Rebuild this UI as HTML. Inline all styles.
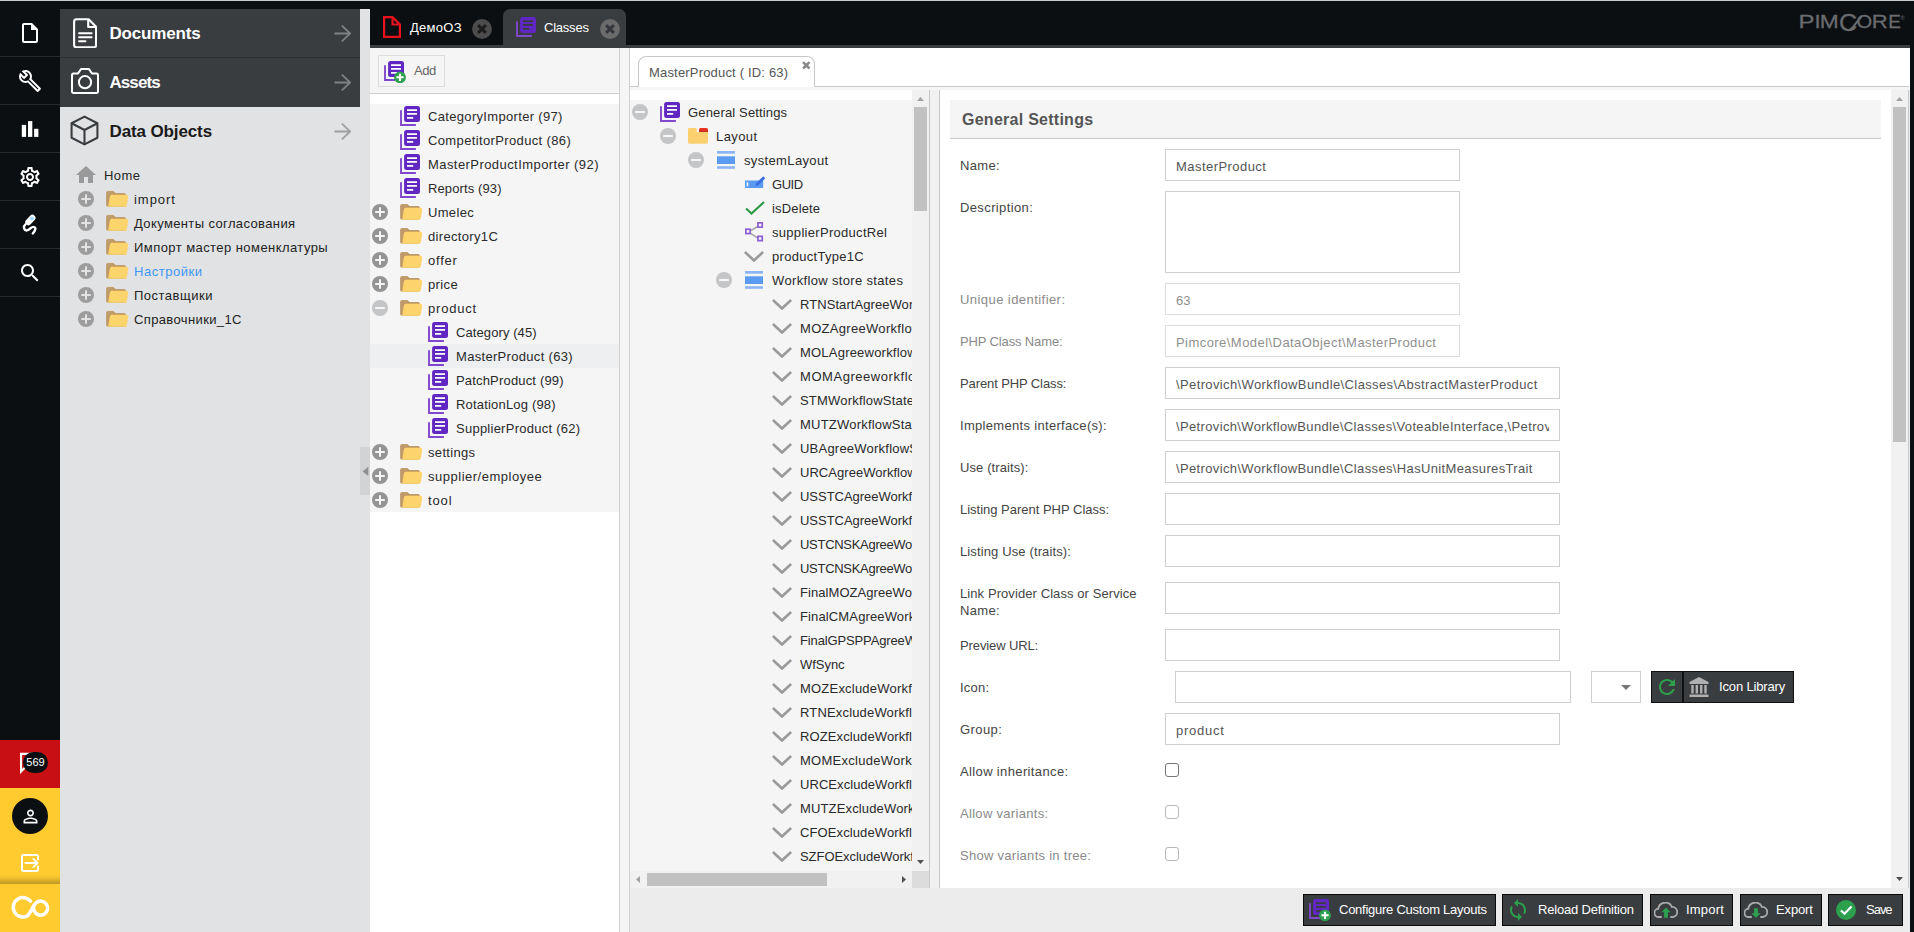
<!DOCTYPE html>
<html lang="en"><head><meta charset="utf-8"><title>Pimcore</title><style>
html,body{margin:0;padding:0}
body{width:1914px;height:932px;overflow:hidden;position:relative;background:#0c0f12;font-family:"Liberation Sans", sans-serif;font-size:13px;}
div{box-sizing:border-box}
</style></head><body>
<div style="position:absolute;left:0px;top:0px;width:1914px;height:1px;background:#c9cacb"></div>
<nav id="pimcore_navigation">
<div style="position:absolute;left:0px;top:9px;width:60px;height:48px;border-bottom:1px solid #26292c"><div style="position:absolute;left:18px;top:12px;"><svg width="24" height="24" viewBox="0 0 24 24" style="display:block;"><path fill="#fff" d="M14 2H6c-1.1 0-1.99.9-1.99 2L4 20c0 1.1.89 2 1.99 2H18c1.1 0 2-.9 2-2V8l-6-6zM6 20V4h7v5h5v11H6z"/></svg></div></div>
<div style="position:absolute;left:0px;top:57px;width:60px;height:48px;border-bottom:1px solid #26292c"><div style="position:absolute;left:18px;top:12px;"><svg width="24" height="24" viewBox="0 0 24 24" style="display:block;"><path fill="#fff" d="M22.61 18.99l-9.08-9.08c.93-2.34.45-5.1-1.44-7C9.79.61 6.21.4 3.66 2.26L7.5 6.11 6.08 7.52 2.25 3.69C.39 6.23.6 9.82 2.9 12.11c1.86 1.86 4.57 2.35 6.89 1.48l9.11 9.11c.39.39 1.02.39 1.41 0l2.3-2.3c.4-.38.4-1.01 0-1.41zm-3 1.6l-9.46-9.46c-.61.45-1.29.72-2 .82-1.36.2-2.79-.21-3.83-1.25C3.37 9.76 2.93 8.5 3 7.26l3.09 3.09 4.24-4.24-3.09-3.09c1.24-.07 2.49.37 3.44 1.31 1.08 1.08 1.49 2.57 1.24 3.96-.12.71-.42 1.37-.88 1.96l9.45 9.45-.88.89z"/></svg></div></div>
<div style="position:absolute;left:0px;top:105px;width:60px;height:48px;border-bottom:1px solid #26292c"><div style="position:absolute;left:18px;top:12px;"><svg width="24" height="24" viewBox="0 0 24 24" style="display:block;"><g fill="#fff"><rect x="3.800" y="7.900" width="4.300" height="12"/><rect x="10" y="4.100" width="4.300" height="15.800"/><rect x="16.100" y="11.800" width="4.300" height="8.100"/></g></svg></div></div>
<div style="position:absolute;left:0px;top:153px;width:60px;height:48px;border-bottom:1px solid #26292c"><div style="position:absolute;left:18px;top:12px;"><svg width="24" height="24" viewBox="0 0 24 24" style="display:block;"><path fill="#fff" d="M19.43 12.98c.04-.32.07-.64.07-.98 0-.34-.03-.66-.07-.98l2.11-1.65c.19-.15.24-.42.12-.64l-2-3.46c-.09-.16-.26-.25-.44-.25-.06 0-.12.01-.17.03l-2.49 1c-.52-.4-1.08-.73-1.69-.98l-.38-2.65C14.46 2.18 14.25 2 14 2h-4c-.25 0-.46.18-.49.42l-.38 2.65c-.61.25-1.17.59-1.69.98l-2.49-1c-.06-.02-.12-.03-.18-.03-.17 0-.34.09-.43.25l-2 3.46c-.13.22-.07.49.12.64l2.11 1.65c-.04.32-.07.65-.07.98 0 .33.03.66.07.98l-2.11 1.65c-.19.15-.24.42-.12.64l2 3.46c.09.16.26.25.44.25.06 0 .12-.01.17-.03l2.49-1c.52.4 1.08.73 1.69.98l.38 2.65c.03.24.24.42.49.42h4c.25 0 .46-.18.49-.42l.38-2.65c.61-.25 1.17-.59 1.69-.98l2.49 1c.06.02.12.03.18.03.17 0 .34-.09.43-.25l2-3.46c.12-.22.07-.49-.12-.64l-2.11-1.65zm-1.98-1.71c.04.31.05.52.05.73 0 .21-.02.43-.05.73l-.14 1.13.89.7 1.08.84-.7 1.21-1.27-.51-1.04-.42-.9.68c-.43.32-.84.56-1.25.73l-1.06.43-.16 1.13-.2 1.35h-1.4l-.19-1.35-.16-1.13-1.06-.43c-.43-.18-.83-.41-1.23-.71l-.91-.7-1.06.43-1.27.51-.7-1.21 1.08-.84.89-.7-.14-1.13c-.03-.31-.05-.54-.05-.74s.02-.43.05-.73l.14-1.13-.89-.7-1.08-.84.7-1.21 1.27.51 1.04.42.9-.68c.43-.32.84-.56 1.25-.73l1.06-.43.16-1.13.2-1.35h1.39l.19 1.35.16 1.13 1.06.43c.43.18.83.41 1.23.71l.91.7 1.06-.43 1.27-.51.7 1.21-1.07.85-.89.7.14 1.13zM12 8c-2.21 0-4 1.79-4 4s1.79 4 4 4 4-1.79 4-4-1.79-4-4-4zm0 6c-1.1 0-2-.9-2-2s.9-2 2-2 2 .9 2 2-.9 2-2 2z"/></svg></div></div>
<div style="position:absolute;left:0px;top:201px;width:60px;height:48px;border-bottom:1px solid #26292c"><div style="position:absolute;left:18px;top:4px;"><svg width="24" height="32" viewBox="0 0 24 32" style="display:block;"><g fill="none" stroke="#fff" stroke-linecap="round"><path stroke-width="2.400" d="M7.500 19.300C6.300 20.300 5.700 21.800 6 22.800C6.500 24.800 7.900 25.600 8.900 25.400C10.300 25.200 11.500 24.100 12.500 23.300C13.500 22.500 14.500 21.800 15.500 21.900C17 22 17.600 23.300 17.300 24.300C16.900 26 15.800 27.500 14.800 28.500"/><path stroke-width="6.200" d="M10.400 17.100L14.400 12.900"/></g><circle cx="13.900" cy="13.400" r="2" fill="#a4daf8"/></svg></div></div>
<div style="position:absolute;left:0px;top:249px;width:60px;height:48px;border-bottom:1px solid #26292c"><div style="position:absolute;left:18px;top:12px;"><svg width="24" height="24" viewBox="0 0 24 24" style="display:block;"><path fill="#fff" d="M15.5 14h-.79l-.28-.27C15.41 12.59 16 11.11 16 9.5 16 5.91 13.09 3 9.5 3S3 5.91 3 9.5 5.91 16 9.5 16c1.61 0 3.09-.59 4.23-1.57l.27.28v.79l5 4.99L20.49 19l-4.99-5zm-6 0C7.01 14 5 11.99 5 9.5S7.01 5 9.5 5 14 7.01 14 9.5 11.99 14 9.5 14z"/></svg></div></div>
<div style="position:absolute;left:0px;top:740px;width:60px;height:48px;background:#c81014"><div style="position:absolute;left:19px;top:12px;"><svg width="22" height="22" viewBox="0 0 22 22" style="display:block;"><path fill="none" stroke="#fff" stroke-width="2.100" stroke-linejoin="miter" d="M2.050 1.900H20V14.500H7L2.050 19.500z"/></svg></div><div style="position:absolute;left:23px;top:12px;width:25px;height:21px;background:#0c0f12;border-radius:11px;color:#fff;font-size:11px;line-height:21px;text-align:center;letter-spacing:0px">569</div></div>
<div style="position:absolute;left:0px;top:788px;width:60px;height:144px;background:#ffcb2f"><div style="position:absolute;left:12px;top:10px;width:36px;height:36px;background:#0c0f12;border-radius:18px"><div style="position:absolute;left:7.5px;top:7.5px;"><svg width="21" height="21" viewBox="0 0 24 24" style="display:block;"><path fill="#fff" d="M12 5.9c1.16 0 2.1.94 2.1 2.1s-.94 2.1-2.1 2.1S9.9 9.16 9.9 8s.94-2.1 2.1-2.1m0 9c2.97 0 6.1 1.46 6.1 2.1v1.1H5.9V17c0-.64 3.13-2.1 6.1-2.1M12 4C9.79 4 8 5.79 8 8s1.79 4 4 4 4-1.79 4-4-1.79-4-4-4zm0 9c-2.67 0-8 1.34-8 4v3h16v-3c0-2.66-5.33-4-8-4z"/></svg></div></div><div style="position:absolute;left:18px;top:63px;"><svg width="24" height="24" viewBox="0 0 24 24" style="display:block;"><g fill="none" stroke="#fff" stroke-width="2" stroke-linecap="round" stroke-linejoin="round"><path d="M20 8.500V5.500a1.500 1.500 0 0 0-1.500-1.500h-13A1.500 1.500 0 0 0 4 5.500v13A1.500 1.500 0 0 0 5.500 20h13a1.500 1.500 0 0 0 1.500-1.500V15.500"/><path d="M7.500 12H19M15.500 8l4 4-4 4"/></g></svg></div><div style="position:absolute;left:0px;top:86px;width:60px;height:10px;background:linear-gradient(to bottom,rgba(0,0,0,0),rgba(0,0,0,.06) 40%,rgba(0,0,0,.26))"></div><div style="position:absolute;left:8px;top:107px;"><svg width="44" height="26" viewBox="0 0 44 26" style="display:block;"><g fill="none" stroke="#fff" stroke-width="3.500" stroke-linecap="round"><path d="M22.500 6.200A9.700 9.700 0 1 0 19 21.100C22.500 19 24.500 11 27.800 8.100A7 7 0 1 1 26.200 15.800A7 7 0 0 1 27.800 8.100"/></g></svg></div></div>
</nav>
<aside id="pimcore_panel_tree_left">
<div style="position:absolute;left:60px;top:9px;width:300px;height:48px;background:#3a3d40"><div style="position:absolute;left:12.9px;top:8.65px;"><svg width="24.2" height="30.6" viewBox="0 0 24 30" style="display:block;"><g fill="none" stroke="#fff" stroke-width="2.100" stroke-linejoin="round" stroke-linecap="butt"><path d="M15.500 1.100H3.500a2.400 2.400 0 0 0-2.400 2.400v23a2.400 2.400 0 0 0 2.400 2.400h17a2.400 2.400 0 0 0 2.400-2.400V8.500z"/><path d="M15.100 1.500v7.300h7.300"/><path d="M6 15H18.500M6 18.900H18.500M6 22.900H12.400" stroke-width="1.900" stroke-linecap="round"/></g></svg></div><div style="position:absolute;left:49.5px;top:1px;height:48px;line-height:48px;font-size:17px;color:#fff;font-weight:700;letter-spacing:-0.184px;white-space:nowrap;">Documents</div><div style="position:absolute;left:274.3px;top:15.9px;"><svg width="17" height="17" viewBox="0 0 17 17" style="display:block;"><g fill="none" stroke="#7f8183" stroke-width="1.800" stroke-linecap="butt"><path d="M0.500 8.500H16M7.800 0.600L16.200 8.500L7.800 16.400"/></g></svg></div></div>
<div style="position:absolute;left:60px;top:57px;width:300px;height:1px;background:#2e3134"></div>
<div style="position:absolute;left:60px;top:58px;width:300px;height:49px;background:#3a3d40"><div style="position:absolute;left:11.2px;top:9.9px;"><svg width="28" height="26" viewBox="0 0 28 26" style="display:block;"><g fill="none" stroke="#fff" stroke-width="2" stroke-linejoin="round"><path d="M7 5.500L10 1.100H18L21 5.500H25.500A1.500 1.500 0 0 1 27 7V23.500A1.500 1.500 0 0 1 25.500 25H2.500A1.500 1.500 0 0 1 1 23.500V7A1.500 1.500 0 0 1 2.500 5.500z"/><circle cx="14" cy="14.200" r="6.100"/></g></svg></div><div style="position:absolute;left:49.5px;top:1px;height:48px;line-height:48px;font-size:17px;color:#fff;font-weight:700;letter-spacing:-0.932px;white-space:nowrap;">Assets</div><div style="position:absolute;left:274.3px;top:15.9px;"><svg width="17" height="17" viewBox="0 0 17 17" style="display:block;"><g fill="none" stroke="#7f8183" stroke-width="1.800" stroke-linecap="butt"><path d="M0.500 8.500H16M7.800 0.600L16.200 8.500L7.800 16.400"/></g></svg></div></div>
<div style="position:absolute;left:60px;top:107px;width:300px;height:825px;background:#e1e2e3"><div style="position:absolute;left:10px;top:8px;"><svg width="29" height="31" viewBox="0 0 28 30" style="display:block;"><g fill="none" stroke="#3a3d40" stroke-width="2" stroke-linejoin="round"><path d="M14 1.500L26.500 8v14L14 28.500 1.500 22V8z"/><path d="M1.500 8L14 14.500 26.500 8M14 14.500v14"/></g></svg></div><div style="position:absolute;left:49.5px;top:1px;height:48px;line-height:48px;font-size:17px;color:#1a1a1a;font-weight:700;letter-spacing:-0.121px;white-space:nowrap;">Data Objects</div><div style="position:absolute;left:274.3px;top:15.9px;"><svg width="17" height="17" viewBox="0 0 17 17" style="display:block;"><g fill="none" stroke="#9fa0a1" stroke-width="1.800" stroke-linecap="butt"><path d="M0.500 8.500H16M7.800 0.600L16.200 8.500L7.800 16.400"/></g></svg></div></div>
<div style="position:absolute;left:74px;top:162.5px;"><svg width="24" height="24" viewBox="0 0 24 24" style="display:block;"><path fill="#9a9a9a" d="M10 20v-6h4v6h5v-8h3L12 3 2 12h3v8z"/></svg></div>
<div style="position:absolute;left:104px;top:164px;height:24px;line-height:24px;font-size:13px;color:#222;font-weight:400;letter-spacing:0.474px;white-space:nowrap;">Home</div>
<div style="position:absolute;left:78px;top:191px;"><svg width="16" height="16" viewBox="0 0 16 16" style="display:block;"><circle cx="8" cy="8" r="8" fill="#9d9d9e"/><path d="M8 3.200v9.600M3.200 8h9.600" stroke="#e1e2e3" stroke-width="2" fill="none"/></svg></div>
<div style="position:absolute;left:103.7px;top:187.35px;"><svg width="25.2" height="23.7" viewBox="0 0 48 48" preserveAspectRatio="none" style="display:block"><path fill="#c09a68" d="M38,12H22l-4-4H8c-2.200,0-4,1.800-4,4v24c0,2.200,1.800,4,4,4h31c1.700,0,3-1.300,3-3V16C42,13.800,40.200,12,38,12z"/><path fill="#fcd46b" d="M42.200,15.600H15.300c-1.900,0-3.600,1.400-3.900,3.300L8,40h31.700c1.900,0,3.600-1.400,3.900-3.300l2.500-16.400C46.600,17.900,44.700,15.600,42.200,15.600z"/></svg></div>
<div style="position:absolute;left:134px;top:188px;height:24px;line-height:24px;font-size:13px;color:#222;font-weight:400;letter-spacing:0.956px;white-space:nowrap;">import</div>
<div style="position:absolute;left:78px;top:215px;"><svg width="16" height="16" viewBox="0 0 16 16" style="display:block;"><circle cx="8" cy="8" r="8" fill="#9d9d9e"/><path d="M8 3.200v9.600M3.200 8h9.600" stroke="#e1e2e3" stroke-width="2" fill="none"/></svg></div>
<div style="position:absolute;left:103.7px;top:211.35px;"><svg width="25.2" height="23.7" viewBox="0 0 48 48" preserveAspectRatio="none" style="display:block"><path fill="#c09a68" d="M38,12H22l-4-4H8c-2.200,0-4,1.800-4,4v24c0,2.200,1.800,4,4,4h31c1.700,0,3-1.300,3-3V16C42,13.800,40.200,12,38,12z"/><path fill="#fcd46b" d="M42.200,15.600H15.300c-1.900,0-3.600,1.400-3.900,3.300L8,40h31.700c1.900,0,3.600-1.400,3.900-3.300l2.500-16.400C46.600,17.900,44.700,15.600,42.200,15.600z"/></svg></div>
<div style="position:absolute;left:134px;top:212px;height:24px;line-height:24px;font-size:13px;color:#222;font-weight:400;letter-spacing:0.38px;white-space:nowrap;">Документы согласования</div>
<div style="position:absolute;left:78px;top:239px;"><svg width="16" height="16" viewBox="0 0 16 16" style="display:block;"><circle cx="8" cy="8" r="8" fill="#9d9d9e"/><path d="M8 3.200v9.600M3.200 8h9.600" stroke="#e1e2e3" stroke-width="2" fill="none"/></svg></div>
<div style="position:absolute;left:103.7px;top:235.35px;"><svg width="25.2" height="23.7" viewBox="0 0 48 48" preserveAspectRatio="none" style="display:block"><path fill="#c09a68" d="M38,12H22l-4-4H8c-2.200,0-4,1.800-4,4v24c0,2.200,1.800,4,4,4h31c1.700,0,3-1.300,3-3V16C42,13.800,40.200,12,38,12z"/><path fill="#fcd46b" d="M42.200,15.600H15.300c-1.900,0-3.600,1.400-3.900,3.300L8,40h31.700c1.900,0,3.600-1.400,3.900-3.300l2.500-16.400C46.600,17.900,44.700,15.600,42.200,15.600z"/></svg></div>
<div style="position:absolute;left:134px;top:236px;height:24px;line-height:24px;font-size:13px;color:#222;font-weight:400;letter-spacing:0.438px;white-space:nowrap;">Импорт мастер номенклатуры</div>
<div style="position:absolute;left:78px;top:263px;"><svg width="16" height="16" viewBox="0 0 16 16" style="display:block;"><circle cx="8" cy="8" r="8" fill="#9d9d9e"/><path d="M8 3.200v9.600M3.200 8h9.600" stroke="#e1e2e3" stroke-width="2" fill="none"/></svg></div>
<div style="position:absolute;left:103.7px;top:259.35px;"><svg width="25.2" height="23.7" viewBox="0 0 48 48" preserveAspectRatio="none" style="display:block"><path fill="#c09a68" d="M38,12H22l-4-4H8c-2.200,0-4,1.800-4,4v24c0,2.200,1.800,4,4,4h31c1.700,0,3-1.300,3-3V16C42,13.800,40.200,12,38,12z"/><path fill="#fcd46b" d="M42.200,15.600H15.300c-1.900,0-3.600,1.400-3.900,3.300L8,40h31.700c1.900,0,3.600-1.400,3.900-3.300l2.500-16.400C46.600,17.900,44.700,15.600,42.200,15.600z"/></svg></div>
<div style="position:absolute;left:134px;top:260px;height:24px;line-height:24px;font-size:13px;color:#3f97f6;font-weight:400;letter-spacing:0.544px;white-space:nowrap;">Настройки</div>
<div style="position:absolute;left:78px;top:287px;"><svg width="16" height="16" viewBox="0 0 16 16" style="display:block;"><circle cx="8" cy="8" r="8" fill="#9d9d9e"/><path d="M8 3.200v9.600M3.200 8h9.600" stroke="#e1e2e3" stroke-width="2" fill="none"/></svg></div>
<div style="position:absolute;left:103.7px;top:283.35px;"><svg width="25.2" height="23.7" viewBox="0 0 48 48" preserveAspectRatio="none" style="display:block"><path fill="#c09a68" d="M38,12H22l-4-4H8c-2.200,0-4,1.800-4,4v24c0,2.200,1.800,4,4,4h31c1.700,0,3-1.300,3-3V16C42,13.800,40.200,12,38,12z"/><path fill="#fcd46b" d="M42.200,15.600H15.300c-1.900,0-3.600,1.400-3.900,3.300L8,40h31.700c1.900,0,3.600-1.400,3.900-3.300l2.500-16.400C46.600,17.900,44.700,15.600,42.200,15.600z"/></svg></div>
<div style="position:absolute;left:134px;top:284px;height:24px;line-height:24px;font-size:13px;color:#222;font-weight:400;letter-spacing:0.497px;white-space:nowrap;">Поставщики</div>
<div style="position:absolute;left:78px;top:311px;"><svg width="16" height="16" viewBox="0 0 16 16" style="display:block;"><circle cx="8" cy="8" r="8" fill="#9d9d9e"/><path d="M8 3.200v9.600M3.200 8h9.600" stroke="#e1e2e3" stroke-width="2" fill="none"/></svg></div>
<div style="position:absolute;left:103.7px;top:307.35px;"><svg width="25.2" height="23.7" viewBox="0 0 48 48" preserveAspectRatio="none" style="display:block"><path fill="#c09a68" d="M38,12H22l-4-4H8c-2.200,0-4,1.800-4,4v24c0,2.200,1.800,4,4,4h31c1.700,0,3-1.300,3-3V16C42,13.800,40.200,12,38,12z"/><path fill="#fcd46b" d="M42.200,15.600H15.300c-1.900,0-3.600,1.400-3.900,3.300L8,40h31.700c1.900,0,3.600-1.400,3.900-3.300l2.500-16.400C46.600,17.900,44.700,15.600,42.200,15.600z"/></svg></div>
<div style="position:absolute;left:134px;top:308px;height:24px;line-height:24px;font-size:13px;color:#222;font-weight:400;letter-spacing:0.369px;white-space:nowrap;">Справочники_1С</div>
<div style="position:absolute;left:360px;top:9px;width:10px;height:923px;background:#e1e2e3"></div>
<div style="position:absolute;left:360px;top:447px;width:10px;height:48px;background:#d2d3d5"></div>
<div style="position:absolute;left:362px;top:466px;"><svg width="7" height="11" viewBox="0 0 7 11" style="display:block;"><path d="M6.300 0.700v9.300L0.600 5.400z" fill="#8f9092"/></svg></div>
</aside>
<header id="pimcore_panel_tabs">
<div style="position:absolute;left:372px;top:9px;width:129px;height:36px;"><div style="position:absolute;left:11px;top:7px;"><svg width="18" height="22" viewBox="0 0 18 22" style="display:block;"><g fill="none" stroke="#e8121c" stroke-width="2.200" stroke-linejoin="miter"><path d="M1.100 1.100h8.400L16.900 8.500V20.900H1.100z"/><path d="M9.500 1.100v7.400H16.900"/></g></svg></div><div style="position:absolute;left:38px;top:-1px;height:40px;line-height:40px;font-size:13px;color:#fff;font-weight:400;letter-spacing:0.287px;white-space:nowrap;">ДемоОЗ</div><div style="position:absolute;left:100px;top:10px;"><svg width="20" height="20" viewBox="0 0 20 20" style="display:block;"><circle cx="10" cy="10" r="9.900" fill="#4c4c4c"/><path d="M6.100 6.100l7.800 7.800M13.900 6.100l-7.800 7.800" stroke="#1c1c1c" stroke-width="2.900" stroke-linecap="butt" fill="none"/></svg></div></div>
<div style="position:absolute;left:503px;top:9px;width:123px;height:36px;background:#3a3d40;border-radius:7px 7px 0 0"><div style="position:absolute;left:13px;top:8px;"><svg width="20" height="20" viewBox="0 0 20 20" style="display:block;"><path fill="none" stroke="#8048cc" stroke-width="1.900" d="M1 4.300V18.950H15.900"/><rect x="4.100" y="0" width="15.900" height="15.900" rx="2.500" fill="#6127c2"/><path d="M7 4.150h10M7 7.950h10M7 11.950h6.200" stroke="#3a3d40" stroke-width="1.750" fill="none"/></svg></div><div style="position:absolute;left:41px;top:-1px;height:40px;line-height:40px;font-size:13px;color:#fff;font-weight:400;letter-spacing:-0.223px;white-space:nowrap;">Classes</div><div style="position:absolute;left:97px;top:10px;"><svg width="20" height="20" viewBox="0 0 20 20" style="display:block;"><circle cx="10" cy="10" r="9.900" fill="#6b6b6b"/><path d="M6.100 6.100l7.800 7.800M13.900 6.100l-7.800 7.800" stroke="#33363a" stroke-width="2.900" stroke-linecap="butt" fill="none"/></svg></div></div>
<div style="position:absolute;left:370px;top:45px;width:1540px;height:3px;background:#3a3d40"></div>
<div style="position:absolute;left:370px;top:48px;width:1540px;height:884px;background:#fff"></div>
</header>
<main id="pimcore_classes">
<section id="classes_tree">
<div style="position:absolute;left:370px;top:48px;width:250px;height:45px;background:#f5f5f5"></div>
<div style="position:absolute;left:370px;top:93px;width:250px;height:1px;background:#d0d0d0"></div>
<div style="position:absolute;left:378px;top:55px;width:67px;height:32px;border:1px solid #dcdcdc;background:#f5f5f5"><div style="position:absolute;left:5px;top:5px;"><svg width="22" height="22" viewBox="0 0 22 22" style="display:block;"><path fill="none" stroke="#8048cc" stroke-width="1.900" d="M1 4.300V18.950H11.500"/><rect x="4.100" y="0" width="15.900" height="15.900" rx="2.500" fill="#6127c2"/><path d="M7 4.150h10M7 7.950h10M7 11.950h6.200" stroke="#fff" stroke-width="1.750" fill="none"/><circle cx="16" cy="16.300" r="5.900" fill="#2da04e"/><path d="M16 12.700v7.200M12.400 16.300h7.200" stroke="#fff" stroke-width="2.100" fill="none"/></svg></div><div style="position:absolute;left:35px;top:0px;height:30px;line-height:30px;font-size:13px;color:#666;font-weight:400;letter-spacing:-0.416px;white-space:nowrap;">Add</div></div>
<div style="position:absolute;left:619px;top:48px;width:1px;height:884px;background:#d0d0d0"></div>
<div style="position:absolute;left:620px;top:48px;width:9px;height:884px;background:#f5f5f5"></div>
<div style="position:absolute;left:629px;top:48px;width:1px;height:884px;background:#d0d0d0"></div>
<div style="position:absolute;left:370px;top:104px;width:249px;height:24px;background:#f5f5f5"></div>
<div style="position:absolute;left:400px;top:106px;"><svg width="20" height="20" viewBox="0 0 20 20" style="display:block;"><path fill="none" stroke="#8048cc" stroke-width="1.900" d="M1 4.300V18.950H15.900"/><rect x="4.100" y="0" width="15.900" height="15.900" rx="2.500" fill="#6127c2"/><path d="M7 4.150h10M7 7.950h10M7 11.950h6.200" stroke="#fff" stroke-width="1.750" fill="none"/></svg></div>
<div style="position:absolute;left:428px;top:105px;height:24px;line-height:24px;font-size:13px;color:#2a2a2a;font-weight:400;letter-spacing:0.326px;white-space:nowrap;">CategoryImporter (97)</div>
<div style="position:absolute;left:370px;top:128px;width:249px;height:24px;background:#f5f5f5"></div>
<div style="position:absolute;left:400px;top:130px;"><svg width="20" height="20" viewBox="0 0 20 20" style="display:block;"><path fill="none" stroke="#8048cc" stroke-width="1.900" d="M1 4.300V18.950H15.900"/><rect x="4.100" y="0" width="15.900" height="15.900" rx="2.500" fill="#6127c2"/><path d="M7 4.150h10M7 7.950h10M7 11.950h6.200" stroke="#fff" stroke-width="1.750" fill="none"/></svg></div>
<div style="position:absolute;left:428px;top:129px;height:24px;line-height:24px;font-size:13px;color:#2a2a2a;font-weight:400;letter-spacing:0.366px;white-space:nowrap;">CompetitorProduct (86)</div>
<div style="position:absolute;left:370px;top:152px;width:249px;height:24px;background:#f5f5f5"></div>
<div style="position:absolute;left:400px;top:154px;"><svg width="20" height="20" viewBox="0 0 20 20" style="display:block;"><path fill="none" stroke="#8048cc" stroke-width="1.900" d="M1 4.300V18.950H15.900"/><rect x="4.100" y="0" width="15.900" height="15.900" rx="2.500" fill="#6127c2"/><path d="M7 4.150h10M7 7.950h10M7 11.950h6.200" stroke="#fff" stroke-width="1.750" fill="none"/></svg></div>
<div style="position:absolute;left:428px;top:153px;height:24px;line-height:24px;font-size:13px;color:#2a2a2a;font-weight:400;letter-spacing:0.433px;white-space:nowrap;">MasterProductImporter (92)</div>
<div style="position:absolute;left:370px;top:176px;width:249px;height:24px;background:#f5f5f5"></div>
<div style="position:absolute;left:400px;top:178px;"><svg width="20" height="20" viewBox="0 0 20 20" style="display:block;"><path fill="none" stroke="#8048cc" stroke-width="1.900" d="M1 4.300V18.950H15.900"/><rect x="4.100" y="0" width="15.900" height="15.900" rx="2.500" fill="#6127c2"/><path d="M7 4.150h10M7 7.950h10M7 11.950h6.200" stroke="#fff" stroke-width="1.750" fill="none"/></svg></div>
<div style="position:absolute;left:428px;top:177px;height:24px;line-height:24px;font-size:13px;color:#2a2a2a;font-weight:400;letter-spacing:0.113px;white-space:nowrap;">Reports (93)</div>
<div style="position:absolute;left:370px;top:200px;width:249px;height:24px;background:#f5f5f5"></div>
<div style="position:absolute;left:372px;top:204px;"><svg width="16" height="16" viewBox="0 0 16 16" style="display:block;"><circle cx="8" cy="8" r="8" fill="#949494"/><path d="M8 3.200v9.600M3.200 8h9.600" stroke="#f5f5f5" stroke-width="2" fill="none"/></svg></div>
<div style="position:absolute;left:397.7px;top:200.35px;"><svg width="25.2" height="23.7" viewBox="0 0 48 48" preserveAspectRatio="none" style="display:block"><path fill="#c09a68" d="M38,12H22l-4-4H8c-2.200,0-4,1.800-4,4v24c0,2.200,1.800,4,4,4h31c1.700,0,3-1.300,3-3V16C42,13.800,40.200,12,38,12z"/><path fill="#fcd46b" d="M42.200,15.600H15.300c-1.900,0-3.600,1.400-3.900,3.300L8,40h31.700c1.900,0,3.600-1.400,3.900-3.300l2.500-16.400C46.600,17.900,44.700,15.600,42.200,15.600z"/></svg></div>
<div style="position:absolute;left:428px;top:201px;height:24px;line-height:24px;font-size:13px;color:#2a2a2a;font-weight:400;letter-spacing:0.327px;white-space:nowrap;">Umelec</div>
<div style="position:absolute;left:370px;top:224px;width:249px;height:24px;background:#f5f5f5"></div>
<div style="position:absolute;left:372px;top:228px;"><svg width="16" height="16" viewBox="0 0 16 16" style="display:block;"><circle cx="8" cy="8" r="8" fill="#949494"/><path d="M8 3.200v9.600M3.200 8h9.600" stroke="#f5f5f5" stroke-width="2" fill="none"/></svg></div>
<div style="position:absolute;left:397.7px;top:224.35px;"><svg width="25.2" height="23.7" viewBox="0 0 48 48" preserveAspectRatio="none" style="display:block"><path fill="#c09a68" d="M38,12H22l-4-4H8c-2.200,0-4,1.800-4,4v24c0,2.200,1.800,4,4,4h31c1.700,0,3-1.300,3-3V16C42,13.800,40.200,12,38,12z"/><path fill="#fcd46b" d="M42.200,15.600H15.300c-1.900,0-3.600,1.400-3.900,3.300L8,40h31.700c1.900,0,3.600-1.400,3.900-3.300l2.500-16.400C46.600,17.900,44.700,15.600,42.200,15.600z"/></svg></div>
<div style="position:absolute;left:428px;top:225px;height:24px;line-height:24px;font-size:13px;color:#2a2a2a;font-weight:400;letter-spacing:0.333px;white-space:nowrap;">directory1C</div>
<div style="position:absolute;left:370px;top:248px;width:249px;height:24px;background:#f5f5f5"></div>
<div style="position:absolute;left:372px;top:252px;"><svg width="16" height="16" viewBox="0 0 16 16" style="display:block;"><circle cx="8" cy="8" r="8" fill="#949494"/><path d="M8 3.200v9.600M3.200 8h9.600" stroke="#f5f5f5" stroke-width="2" fill="none"/></svg></div>
<div style="position:absolute;left:397.7px;top:248.35px;"><svg width="25.2" height="23.7" viewBox="0 0 48 48" preserveAspectRatio="none" style="display:block"><path fill="#c09a68" d="M38,12H22l-4-4H8c-2.200,0-4,1.800-4,4v24c0,2.200,1.800,4,4,4h31c1.700,0,3-1.300,3-3V16C42,13.800,40.200,12,38,12z"/><path fill="#fcd46b" d="M42.200,15.600H15.300c-1.900,0-3.600,1.400-3.900,3.300L8,40h31.700c1.900,0,3.600-1.400,3.900-3.300l2.500-16.400C46.600,17.900,44.700,15.600,42.200,15.600z"/></svg></div>
<div style="position:absolute;left:428px;top:249px;height:24px;line-height:24px;font-size:13px;color:#2a2a2a;font-weight:400;letter-spacing:0.78px;white-space:nowrap;">offer</div>
<div style="position:absolute;left:370px;top:272px;width:249px;height:24px;background:#f5f5f5"></div>
<div style="position:absolute;left:372px;top:276px;"><svg width="16" height="16" viewBox="0 0 16 16" style="display:block;"><circle cx="8" cy="8" r="8" fill="#949494"/><path d="M8 3.200v9.600M3.200 8h9.600" stroke="#f5f5f5" stroke-width="2" fill="none"/></svg></div>
<div style="position:absolute;left:397.7px;top:272.35px;"><svg width="25.2" height="23.7" viewBox="0 0 48 48" preserveAspectRatio="none" style="display:block"><path fill="#c09a68" d="M38,12H22l-4-4H8c-2.200,0-4,1.800-4,4v24c0,2.200,1.800,4,4,4h31c1.700,0,3-1.300,3-3V16C42,13.800,40.200,12,38,12z"/><path fill="#fcd46b" d="M42.200,15.600H15.300c-1.900,0-3.600,1.400-3.900,3.300L8,40h31.700c1.900,0,3.600-1.400,3.900-3.300l2.500-16.400C46.600,17.900,44.700,15.600,42.200,15.600z"/></svg></div>
<div style="position:absolute;left:428px;top:273px;height:24px;line-height:24px;font-size:13px;color:#2a2a2a;font-weight:400;letter-spacing:0.38px;white-space:nowrap;">price</div>
<div style="position:absolute;left:370px;top:296px;width:249px;height:24px;background:#f5f5f5"></div>
<div style="position:absolute;left:372px;top:300px;"><svg width="16" height="16" viewBox="0 0 16 16" style="display:block;"><circle cx="8" cy="8" r="8" fill="#c4c5c7"/><path d="M3.100 8h9.800" stroke="#f5f5f5" stroke-width="2.100" fill="none"/></svg></div>
<div style="position:absolute;left:397.7px;top:296.35px;"><svg width="25.2" height="23.7" viewBox="0 0 48 48" preserveAspectRatio="none" style="display:block"><path fill="#c09a68" d="M38,12H22l-4-4H8c-2.200,0-4,1.800-4,4v24c0,2.200,1.800,4,4,4h31c1.700,0,3-1.300,3-3V16C42,13.800,40.200,12,38,12z"/><path fill="#fcd46b" d="M42.200,15.600H15.300c-1.900,0-3.600,1.400-3.900,3.300L8,40h31.700c1.900,0,3.600-1.400,3.900-3.300l2.500-16.400C46.600,17.900,44.700,15.600,42.200,15.600z"/></svg></div>
<div style="position:absolute;left:428px;top:297px;height:24px;line-height:24px;font-size:13px;color:#2a2a2a;font-weight:400;letter-spacing:0.79px;white-space:nowrap;">product</div>
<div style="position:absolute;left:370px;top:320px;width:249px;height:24px;background:#f5f5f5"></div>
<div style="position:absolute;left:428px;top:322px;"><svg width="20" height="20" viewBox="0 0 20 20" style="display:block;"><path fill="none" stroke="#8048cc" stroke-width="1.900" d="M1 4.300V18.950H15.900"/><rect x="4.100" y="0" width="15.900" height="15.900" rx="2.500" fill="#6127c2"/><path d="M7 4.150h10M7 7.950h10M7 11.950h6.200" stroke="#fff" stroke-width="1.750" fill="none"/></svg></div>
<div style="position:absolute;left:456px;top:321px;height:24px;line-height:24px;font-size:13px;color:#2a2a2a;font-weight:400;letter-spacing:0.093px;white-space:nowrap;">Category (45)</div>
<div style="position:absolute;left:370px;top:344px;width:249px;height:24px;background:#eeeff1"></div>
<div style="position:absolute;left:428px;top:346px;"><svg width="20" height="20" viewBox="0 0 20 20" style="display:block;"><path fill="none" stroke="#8048cc" stroke-width="1.900" d="M1 4.300V18.950H15.900"/><rect x="4.100" y="0" width="15.900" height="15.900" rx="2.500" fill="#6127c2"/><path d="M7 4.150h10M7 7.950h10M7 11.950h6.200" stroke="#fff" stroke-width="1.750" fill="none"/></svg></div>
<div style="position:absolute;left:456px;top:345px;height:24px;line-height:24px;font-size:13px;color:#2a2a2a;font-weight:400;letter-spacing:0.314px;white-space:nowrap;">MasterProduct (63)</div>
<div style="position:absolute;left:370px;top:368px;width:249px;height:24px;background:#f5f5f5"></div>
<div style="position:absolute;left:428px;top:370px;"><svg width="20" height="20" viewBox="0 0 20 20" style="display:block;"><path fill="none" stroke="#8048cc" stroke-width="1.900" d="M1 4.300V18.950H15.900"/><rect x="4.100" y="0" width="15.900" height="15.900" rx="2.500" fill="#6127c2"/><path d="M7 4.150h10M7 7.950h10M7 11.950h6.200" stroke="#fff" stroke-width="1.750" fill="none"/></svg></div>
<div style="position:absolute;left:456px;top:369px;height:24px;line-height:24px;font-size:13px;color:#2a2a2a;font-weight:400;letter-spacing:0.176px;white-space:nowrap;">PatchProduct (99)</div>
<div style="position:absolute;left:370px;top:392px;width:249px;height:24px;background:#f5f5f5"></div>
<div style="position:absolute;left:428px;top:394px;"><svg width="20" height="20" viewBox="0 0 20 20" style="display:block;"><path fill="none" stroke="#8048cc" stroke-width="1.900" d="M1 4.300V18.950H15.900"/><rect x="4.100" y="0" width="15.900" height="15.900" rx="2.500" fill="#6127c2"/><path d="M7 4.150h10M7 7.950h10M7 11.950h6.200" stroke="#fff" stroke-width="1.750" fill="none"/></svg></div>
<div style="position:absolute;left:456px;top:393px;height:24px;line-height:24px;font-size:13px;color:#2a2a2a;font-weight:400;letter-spacing:0.184px;white-space:nowrap;">RotationLog (98)</div>
<div style="position:absolute;left:370px;top:416px;width:249px;height:24px;background:#f5f5f5"></div>
<div style="position:absolute;left:428px;top:418px;"><svg width="20" height="20" viewBox="0 0 20 20" style="display:block;"><path fill="none" stroke="#8048cc" stroke-width="1.900" d="M1 4.300V18.950H15.900"/><rect x="4.100" y="0" width="15.900" height="15.900" rx="2.500" fill="#6127c2"/><path d="M7 4.150h10M7 7.950h10M7 11.950h6.200" stroke="#fff" stroke-width="1.750" fill="none"/></svg></div>
<div style="position:absolute;left:456px;top:417px;height:24px;line-height:24px;font-size:13px;color:#2a2a2a;font-weight:400;letter-spacing:0.251px;white-space:nowrap;">SupplierProduct (62)</div>
<div style="position:absolute;left:370px;top:440px;width:249px;height:24px;background:#f5f5f5"></div>
<div style="position:absolute;left:372px;top:444px;"><svg width="16" height="16" viewBox="0 0 16 16" style="display:block;"><circle cx="8" cy="8" r="8" fill="#949494"/><path d="M8 3.200v9.600M3.200 8h9.600" stroke="#f5f5f5" stroke-width="2" fill="none"/></svg></div>
<div style="position:absolute;left:397.7px;top:440.35px;"><svg width="25.2" height="23.7" viewBox="0 0 48 48" preserveAspectRatio="none" style="display:block"><path fill="#c09a68" d="M38,12H22l-4-4H8c-2.200,0-4,1.800-4,4v24c0,2.200,1.800,4,4,4h31c1.700,0,3-1.300,3-3V16C42,13.800,40.200,12,38,12z"/><path fill="#fcd46b" d="M42.200,15.600H15.300c-1.900,0-3.600,1.400-3.900,3.300L8,40h31.700c1.900,0,3.600-1.400,3.900-3.300l2.500-16.400C46.600,17.900,44.700,15.600,42.200,15.600z"/></svg></div>
<div style="position:absolute;left:428px;top:441px;height:24px;line-height:24px;font-size:13px;color:#2a2a2a;font-weight:400;letter-spacing:0.328px;white-space:nowrap;">settings</div>
<div style="position:absolute;left:370px;top:464px;width:249px;height:24px;background:#f5f5f5"></div>
<div style="position:absolute;left:372px;top:468px;"><svg width="16" height="16" viewBox="0 0 16 16" style="display:block;"><circle cx="8" cy="8" r="8" fill="#949494"/><path d="M8 3.200v9.600M3.200 8h9.600" stroke="#f5f5f5" stroke-width="2" fill="none"/></svg></div>
<div style="position:absolute;left:397.7px;top:464.35px;"><svg width="25.2" height="23.7" viewBox="0 0 48 48" preserveAspectRatio="none" style="display:block"><path fill="#c09a68" d="M38,12H22l-4-4H8c-2.200,0-4,1.800-4,4v24c0,2.200,1.800,4,4,4h31c1.700,0,3-1.300,3-3V16C42,13.800,40.200,12,38,12z"/><path fill="#fcd46b" d="M42.200,15.600H15.300c-1.900,0-3.600,1.400-3.900,3.300L8,40h31.700c1.900,0,3.600-1.400,3.900-3.300l2.500-16.400C46.600,17.900,44.700,15.600,42.200,15.600z"/></svg></div>
<div style="position:absolute;left:428px;top:465px;height:24px;line-height:24px;font-size:13px;color:#2a2a2a;font-weight:400;letter-spacing:0.512px;white-space:nowrap;">supplier/employee</div>
<div style="position:absolute;left:370px;top:488px;width:249px;height:24px;background:#f5f5f5"></div>
<div style="position:absolute;left:372px;top:492px;"><svg width="16" height="16" viewBox="0 0 16 16" style="display:block;"><circle cx="8" cy="8" r="8" fill="#949494"/><path d="M8 3.200v9.600M3.200 8h9.600" stroke="#f5f5f5" stroke-width="2" fill="none"/></svg></div>
<div style="position:absolute;left:397.7px;top:488.35px;"><svg width="25.2" height="23.7" viewBox="0 0 48 48" preserveAspectRatio="none" style="display:block"><path fill="#c09a68" d="M38,12H22l-4-4H8c-2.200,0-4,1.800-4,4v24c0,2.200,1.800,4,4,4h31c1.700,0,3-1.300,3-3V16C42,13.800,40.200,12,38,12z"/><path fill="#fcd46b" d="M42.200,15.600H15.300c-1.900,0-3.600,1.400-3.900,3.300L8,40h31.700c1.900,0,3.600-1.400,3.900-3.300l2.500-16.400C46.600,17.900,44.700,15.600,42.200,15.600z"/></svg></div>
<div style="position:absolute;left:428px;top:489px;height:24px;line-height:24px;font-size:13px;color:#2a2a2a;font-weight:400;letter-spacing:0.88px;white-space:nowrap;">tool</div>
</section>
<section id="class_editor_tree">
<div style="position:absolute;left:630px;top:86px;width:1279px;height:1px;background:#c8c8c8"></div>
<div style="position:absolute;left:630px;top:87px;width:1280px;height:3px;background:#f5f5f5"></div>
<div style="position:absolute;left:638px;top:56px;width:177px;height:31px;border:1px solid #c8c8c8;border-bottom:none;border-radius:8px 8px 0 0;background:#fff"><div style="position:absolute;left:10px;top:4px;height:24px;line-height:24px;font-size:13px;color:#555;font-weight:400;letter-spacing:0.182px;white-space:nowrap;">MasterProduct ( ID: 63)</div><div style="position:absolute;left:163px;top:4px;"><svg width="9" height="9" viewBox="0 0 9 9" style="display:block;"><path d="M1.100 1.100l6.400 6.400M7.500 1.100L1.100 7.500" stroke="#8a8a8a" stroke-width="2.600" fill="none"/></svg></div></div>
<div style="position:absolute;left:630px;top:90px;width:282px;height:781px;overflow:hidden;background:linear-gradient(to bottom,#fff 10px,#f5f5f5 10px)"><div style="position:absolute;left:2px;top:14px;"><svg width="16" height="16" viewBox="0 0 16 16" style="display:block;"><circle cx="8" cy="8" r="8" fill="#c4c5c7"/><path d="M3.100 8h9.800" stroke="#f5f5f5" stroke-width="2.100" fill="none"/></svg></div><div style="position:absolute;left:30px;top:12px;"><svg width="20" height="20" viewBox="0 0 20 20" style="display:block;"><path fill="none" stroke="#8048cc" stroke-width="1.900" d="M1 4.300V18.950H15.900"/><rect x="4.100" y="0" width="15.900" height="15.900" rx="2.500" fill="#6127c2"/><path d="M7 4.150h10M7 7.950h10M7 11.950h6.200" stroke="#fff" stroke-width="1.750" fill="none"/></svg></div><div style="position:absolute;left:58px;top:11px;height:24px;line-height:24px;font-size:13px;color:#2a2a2a;font-weight:400;letter-spacing:0.151px;white-space:nowrap;">General Settings</div><div style="position:absolute;left:30px;top:38px;"><svg width="16" height="16" viewBox="0 0 16 16" style="display:block;"><circle cx="8" cy="8" r="8" fill="#c4c5c7"/><path d="M3.100 8h9.800" stroke="#f5f5f5" stroke-width="2.100" fill="none"/></svg></div><div style="position:absolute;left:58px;top:38px;"><svg width="20" height="16" viewBox="0 0 20 16" style="display:block;"><path fill="#fbd16f" d="M0 1.400A1.400 1.400 0 0 1 1.400 0H7.500A1.200 1.200 0 0 1 8.700 1.200V4H20V14.300A1.400 1.400 0 0 1 18.600 15.700H1.400A1.400 1.400 0 0 1 0 14.300z"/><path fill="#ea3323" d="M11 3.800V1.500A1.500 1.500 0 0 1 12.500 0H18.500A1.500 1.500 0 0 1 20 1.500V3.800z"/><rect x="11" y="2.800" width="9" height="1" fill="#b4231a"/></svg></div><div style="position:absolute;left:86px;top:35px;height:24px;line-height:24px;font-size:13px;color:#2a2a2a;font-weight:400;letter-spacing:0.414px;white-space:nowrap;">Layout</div><div style="position:absolute;left:58px;top:62px;"><svg width="16" height="16" viewBox="0 0 16 16" style="display:block;"><circle cx="8" cy="8" r="8" fill="#c4c5c7"/><path d="M3.100 8h9.800" stroke="#f5f5f5" stroke-width="2.100" fill="none"/></svg></div><div style="position:absolute;left:87px;top:61px;"><svg width="18" height="18" viewBox="0 0 18 18" style="display:block;"><rect x="0" y="0" width="18" height="2.700" fill="#8ab6f7"/><rect x="0" y="5.300" width="18" height="7.700" fill="#5b9af1"/><rect x="0" y="15.200" width="18" height="2.600" fill="#8ab6f7"/></svg></div><div style="position:absolute;left:114px;top:59px;height:24px;line-height:24px;font-size:13px;color:#2a2a2a;font-weight:400;letter-spacing:0.354px;white-space:nowrap;">systemLayout</div><div style="position:absolute;left:115px;top:85.8px;"><svg width="20" height="13" viewBox="0 0 20 13" style="display:block;"><rect x="0" y="4.500" width="18.200" height="7.500" fill="#5b9af1"/><rect x="1.700" y="6.300" width="1.500" height="4" fill="#fff"/><path d="M10.300 10.200l.9-3.100L17.800.800a.8.800 0 0 1 1.100 0l.9.900a.8.800 0 0 1 0 1.100L13.400 9.300z" fill="#3b6fe0"/></svg></div><div style="position:absolute;left:142px;top:83px;height:24px;line-height:24px;font-size:13px;color:#2a2a2a;font-weight:400;letter-spacing:-0.467px;white-space:nowrap;">GUID</div><div style="position:absolute;left:115px;top:111px;"><svg width="20" height="14" viewBox="0 0 20 14" style="display:block;"><path d="M1 7.500l5.500 5L19 1" stroke="#2c9c49" stroke-width="2.200" fill="none"/></svg></div><div style="position:absolute;left:142px;top:107px;height:24px;line-height:24px;font-size:13px;color:#2a2a2a;font-weight:400;letter-spacing:0.162px;white-space:nowrap;">isDelete</div><div style="position:absolute;left:114.3px;top:132.3px;"><svg width="20" height="20" viewBox="0 0 20 20" style="display:block;"><path d="M4.500 10L14.500 4M4.500 10l10 6.500" stroke="#aaa" stroke-width="1.500" fill="none"/><rect x="1.850" y="7.250" width="4.300" height="4.300" fill="#f5f5f5" stroke="#8d5fd3" stroke-width="1.700"/><rect x="13.950" y="0.850" width="4.300" height="4.300" fill="#f5f5f5" stroke="#8d5fd3" stroke-width="1.700"/><rect x="13.950" y="14.350" width="4.300" height="4.300" fill="#f5f5f5" stroke="#8d5fd3" stroke-width="1.700"/></svg></div><div style="position:absolute;left:142px;top:131px;height:24px;line-height:24px;font-size:13px;color:#2a2a2a;font-weight:400;letter-spacing:0.298px;white-space:nowrap;">supplierProductRel</div><div style="position:absolute;left:114px;top:161.3px;"><svg width="20" height="11" viewBox="0 0 20 11" style="display:block;"><path d="M0.900 1l9.100 8.500L19.100 1" stroke="#9a9a9a" stroke-width="2.600" fill="none"/></svg></div><div style="position:absolute;left:142px;top:155px;height:24px;line-height:24px;font-size:13px;color:#2a2a2a;font-weight:400;letter-spacing:0.295px;white-space:nowrap;">productType1C</div><div style="position:absolute;left:86px;top:182px;"><svg width="16" height="16" viewBox="0 0 16 16" style="display:block;"><circle cx="8" cy="8" r="8" fill="#c4c5c7"/><path d="M3.100 8h9.800" stroke="#f5f5f5" stroke-width="2.100" fill="none"/></svg></div><div style="position:absolute;left:115px;top:181px;"><svg width="18" height="18" viewBox="0 0 18 18" style="display:block;"><rect x="0" y="0" width="18" height="2.700" fill="#8ab6f7"/><rect x="0" y="5.300" width="18" height="7.700" fill="#5b9af1"/><rect x="0" y="15.200" width="18" height="2.600" fill="#8ab6f7"/></svg></div><div style="position:absolute;left:142px;top:179px;height:24px;line-height:24px;font-size:13px;color:#2a2a2a;font-weight:400;letter-spacing:0.344px;white-space:nowrap;">Workflow store states</div><div style="position:absolute;left:142px;top:209.3px;"><svg width="20" height="11" viewBox="0 0 20 11" style="display:block;"><path d="M0.900 1l9.100 8.500L19.100 1" stroke="#9a9a9a" stroke-width="2.600" fill="none"/></svg></div><div style="position:absolute;left:170px;top:203px;height:24px;line-height:24px;font-size:13px;color:#2a2a2a;font-weight:400;letter-spacing:0.068px;white-space:nowrap;">RTNStartAgreeWorkflowState</div><div style="position:absolute;left:142px;top:233.3px;"><svg width="20" height="11" viewBox="0 0 20 11" style="display:block;"><path d="M0.900 1l9.100 8.500L19.100 1" stroke="#9a9a9a" stroke-width="2.600" fill="none"/></svg></div><div style="position:absolute;left:170px;top:227px;height:24px;line-height:24px;font-size:13px;color:#2a2a2a;font-weight:400;letter-spacing:0.307px;white-space:nowrap;">MOZAgreeWorkflowState</div><div style="position:absolute;left:142px;top:257.3px;"><svg width="20" height="11" viewBox="0 0 20 11" style="display:block;"><path d="M0.900 1l9.100 8.500L19.100 1" stroke="#9a9a9a" stroke-width="2.600" fill="none"/></svg></div><div style="position:absolute;left:170px;top:251px;height:24px;line-height:24px;font-size:13px;color:#2a2a2a;font-weight:400;letter-spacing:0.211px;white-space:nowrap;">MOLAgreeworkflowState</div><div style="position:absolute;left:142px;top:281.3px;"><svg width="20" height="11" viewBox="0 0 20 11" style="display:block;"><path d="M0.900 1l9.100 8.500L19.100 1" stroke="#9a9a9a" stroke-width="2.600" fill="none"/></svg></div><div style="position:absolute;left:170px;top:275px;height:24px;line-height:24px;font-size:13px;color:#2a2a2a;font-weight:400;letter-spacing:0.55px;white-space:nowrap;">MOMAgreeworkflowState</div><div style="position:absolute;left:142px;top:305.3px;"><svg width="20" height="11" viewBox="0 0 20 11" style="display:block;"><path d="M0.900 1l9.100 8.500L19.100 1" stroke="#9a9a9a" stroke-width="2.600" fill="none"/></svg></div><div style="position:absolute;left:170px;top:299px;height:24px;line-height:24px;font-size:13px;color:#2a2a2a;font-weight:400;letter-spacing:0.201px;white-space:nowrap;">STMWorkflowState</div><div style="position:absolute;left:142px;top:329.3px;"><svg width="20" height="11" viewBox="0 0 20 11" style="display:block;"><path d="M0.900 1l9.100 8.500L19.100 1" stroke="#9a9a9a" stroke-width="2.600" fill="none"/></svg></div><div style="position:absolute;left:170px;top:323px;height:24px;line-height:24px;font-size:13px;color:#2a2a2a;font-weight:400;letter-spacing:0.212px;white-space:nowrap;">MUTZWorkflowState</div><div style="position:absolute;left:142px;top:353.3px;"><svg width="20" height="11" viewBox="0 0 20 11" style="display:block;"><path d="M0.900 1l9.100 8.500L19.100 1" stroke="#9a9a9a" stroke-width="2.600" fill="none"/></svg></div><div style="position:absolute;left:170px;top:347px;height:24px;line-height:24px;font-size:13px;color:#2a2a2a;font-weight:400;letter-spacing:0.224px;white-space:nowrap;">UBAgreeWorkflowState</div><div style="position:absolute;left:142px;top:377.3px;"><svg width="20" height="11" viewBox="0 0 20 11" style="display:block;"><path d="M0.900 1l9.100 8.500L19.100 1" stroke="#9a9a9a" stroke-width="2.600" fill="none"/></svg></div><div style="position:absolute;left:170px;top:371px;height:24px;line-height:24px;font-size:13px;color:#2a2a2a;font-weight:400;letter-spacing:0.04px;white-space:nowrap;">URCAgreeWorkflowState</div><div style="position:absolute;left:142px;top:401.3px;"><svg width="20" height="11" viewBox="0 0 20 11" style="display:block;"><path d="M0.900 1l9.100 8.500L19.100 1" stroke="#9a9a9a" stroke-width="2.600" fill="none"/></svg></div><div style="position:absolute;left:170px;top:395px;height:24px;line-height:24px;font-size:13px;color:#2a2a2a;font-weight:400;letter-spacing:-0.031px;white-space:nowrap;">USSTCAgreeWorkflowState</div><div style="position:absolute;left:142px;top:425.3px;"><svg width="20" height="11" viewBox="0 0 20 11" style="display:block;"><path d="M0.900 1l9.100 8.500L19.100 1" stroke="#9a9a9a" stroke-width="2.600" fill="none"/></svg></div><div style="position:absolute;left:170px;top:419px;height:24px;line-height:24px;font-size:13px;color:#2a2a2a;font-weight:400;letter-spacing:-0.031px;white-space:nowrap;">USSTCAgreeWorkflowState2</div><div style="position:absolute;left:142px;top:449.3px;"><svg width="20" height="11" viewBox="0 0 20 11" style="display:block;"><path d="M0.900 1l9.100 8.500L19.100 1" stroke="#9a9a9a" stroke-width="2.600" fill="none"/></svg></div><div style="position:absolute;left:170px;top:443px;height:24px;line-height:24px;font-size:13px;color:#2a2a2a;font-weight:400;letter-spacing:-0.291px;white-space:nowrap;">USTCNSKAgreeWorkflowState</div><div style="position:absolute;left:142px;top:473.3px;"><svg width="20" height="11" viewBox="0 0 20 11" style="display:block;"><path d="M0.900 1l9.100 8.500L19.100 1" stroke="#9a9a9a" stroke-width="2.600" fill="none"/></svg></div><div style="position:absolute;left:170px;top:467px;height:24px;line-height:24px;font-size:13px;color:#2a2a2a;font-weight:400;letter-spacing:-0.291px;white-space:nowrap;">USTCNSKAgreeWorkflowState2</div><div style="position:absolute;left:142px;top:497.3px;"><svg width="20" height="11" viewBox="0 0 20 11" style="display:block;"><path d="M0.900 1l9.100 8.500L19.100 1" stroke="#9a9a9a" stroke-width="2.600" fill="none"/></svg></div><div style="position:absolute;left:170px;top:491px;height:24px;line-height:24px;font-size:13px;color:#2a2a2a;font-weight:400;letter-spacing:0.065px;white-space:nowrap;">FinalMOZAgreeWorkflowState</div><div style="position:absolute;left:142px;top:521.3px;"><svg width="20" height="11" viewBox="0 0 20 11" style="display:block;"><path d="M0.900 1l9.100 8.500L19.100 1" stroke="#9a9a9a" stroke-width="2.600" fill="none"/></svg></div><div style="position:absolute;left:170px;top:515px;height:24px;line-height:24px;font-size:13px;color:#2a2a2a;font-weight:400;letter-spacing:0.133px;white-space:nowrap;">FinalCMAgreeWorkflowState</div><div style="position:absolute;left:142px;top:545.3px;"><svg width="20" height="11" viewBox="0 0 20 11" style="display:block;"><path d="M0.900 1l9.100 8.500L19.100 1" stroke="#9a9a9a" stroke-width="2.600" fill="none"/></svg></div><div style="position:absolute;left:170px;top:539px;height:24px;line-height:24px;font-size:13px;color:#2a2a2a;font-weight:400;letter-spacing:-0.132px;white-space:nowrap;">FinalGPSPPAgreeWorkflowState</div><div style="position:absolute;left:142px;top:569.3px;"><svg width="20" height="11" viewBox="0 0 20 11" style="display:block;"><path d="M0.900 1l9.100 8.500L19.100 1" stroke="#9a9a9a" stroke-width="2.600" fill="none"/></svg></div><div style="position:absolute;left:170px;top:563px;height:24px;line-height:24px;font-size:13px;color:#2a2a2a;font-weight:400;letter-spacing:-0.037px;white-space:nowrap;">WfSync</div><div style="position:absolute;left:142px;top:593.3px;"><svg width="20" height="11" viewBox="0 0 20 11" style="display:block;"><path d="M0.900 1l9.100 8.500L19.100 1" stroke="#9a9a9a" stroke-width="2.600" fill="none"/></svg></div><div style="position:absolute;left:170px;top:587px;height:24px;line-height:24px;font-size:13px;color:#2a2a2a;font-weight:400;letter-spacing:0.211px;white-space:nowrap;">MOZExcludeWorkflowState</div><div style="position:absolute;left:142px;top:617.3px;"><svg width="20" height="11" viewBox="0 0 20 11" style="display:block;"><path d="M0.900 1l9.100 8.500L19.100 1" stroke="#9a9a9a" stroke-width="2.600" fill="none"/></svg></div><div style="position:absolute;left:170px;top:611px;height:24px;line-height:24px;font-size:13px;color:#2a2a2a;font-weight:400;letter-spacing:0.167px;white-space:nowrap;">RTNExcludeWorkflowState</div><div style="position:absolute;left:142px;top:641.3px;"><svg width="20" height="11" viewBox="0 0 20 11" style="display:block;"><path d="M0.900 1l9.100 8.500L19.100 1" stroke="#9a9a9a" stroke-width="2.600" fill="none"/></svg></div><div style="position:absolute;left:170px;top:635px;height:24px;line-height:24px;font-size:13px;color:#2a2a2a;font-weight:400;letter-spacing:0.107px;white-space:nowrap;">ROZExcludeWorkflowState</div><div style="position:absolute;left:142px;top:665.3px;"><svg width="20" height="11" viewBox="0 0 20 11" style="display:block;"><path d="M0.900 1l9.100 8.500L19.100 1" stroke="#9a9a9a" stroke-width="2.600" fill="none"/></svg></div><div style="position:absolute;left:170px;top:659px;height:24px;line-height:24px;font-size:13px;color:#2a2a2a;font-weight:400;letter-spacing:0.277px;white-space:nowrap;">MOMExcludeWorkflowState</div><div style="position:absolute;left:142px;top:689.3px;"><svg width="20" height="11" viewBox="0 0 20 11" style="display:block;"><path d="M0.900 1l9.100 8.500L19.100 1" stroke="#9a9a9a" stroke-width="2.600" fill="none"/></svg></div><div style="position:absolute;left:170px;top:683px;height:24px;line-height:24px;font-size:13px;color:#2a2a2a;font-weight:400;letter-spacing:0.062px;white-space:nowrap;">URCExcludeWorkflowState</div><div style="position:absolute;left:142px;top:713.3px;"><svg width="20" height="11" viewBox="0 0 20 11" style="display:block;"><path d="M0.900 1l9.100 8.500L19.100 1" stroke="#9a9a9a" stroke-width="2.600" fill="none"/></svg></div><div style="position:absolute;left:170px;top:707px;height:24px;line-height:24px;font-size:13px;color:#2a2a2a;font-weight:400;letter-spacing:0.148px;white-space:nowrap;">MUTZExcludeWorkflowState</div><div style="position:absolute;left:142px;top:737.3px;"><svg width="20" height="11" viewBox="0 0 20 11" style="display:block;"><path d="M0.900 1l9.100 8.500L19.100 1" stroke="#9a9a9a" stroke-width="2.600" fill="none"/></svg></div><div style="position:absolute;left:170px;top:731px;height:24px;line-height:24px;font-size:13px;color:#2a2a2a;font-weight:400;letter-spacing:0.107px;white-space:nowrap;">CFOExcludeWorkflowState</div><div style="position:absolute;left:142px;top:761.3px;"><svg width="20" height="11" viewBox="0 0 20 11" style="display:block;"><path d="M0.900 1l9.100 8.500L19.100 1" stroke="#9a9a9a" stroke-width="2.600" fill="none"/></svg></div><div style="position:absolute;left:170px;top:755px;height:24px;line-height:24px;font-size:13px;color:#2a2a2a;font-weight:400;letter-spacing:-0.053px;white-space:nowrap;">SZFOExcludeWorkflowState</div></div>
<div style="position:absolute;left:912px;top:90px;width:17px;height:781px;background:#f1f1f1"><div style="position:absolute;left:2px;top:17px;width:13px;height:104px;background:#c1c1c1"></div><div style="position:absolute;left:5px;top:7px;"><svg width="7" height="4" viewBox="0 0 7 4" style="display:block;"><path d="M0 4h7L3.500 0z" fill="#a3a3a3"/></svg></div><div style="position:absolute;left:5px;top:770px;"><svg width="7" height="4" viewBox="0 0 7 4" style="display:block;"><path d="M0 0h7L3.500 4z" fill="#505050"/></svg></div></div>
<div style="position:absolute;left:630px;top:871px;width:282px;height:17px;background:#f1f1f1"><div style="position:absolute;left:17px;top:2px;width:180px;height:13px;background:#c1c1c1"></div><div style="position:absolute;left:6px;top:5px;"><svg width="4" height="7" viewBox="0 0 4 7" style="display:block;"><path d="M4 0v7L0 3.500z" fill="#a3a3a3"/></svg></div><div style="position:absolute;left:272px;top:5px;"><svg width="4" height="7" viewBox="0 0 4 7" style="display:block;"><path d="M0 0v7l4-3.500z" fill="#505050"/></svg></div></div>
<div style="position:absolute;left:912px;top:871px;width:17px;height:17px;background:#dcdcdc"></div>
<div style="position:absolute;left:929px;top:90px;width:1px;height:798px;background:#c8c8c8"></div>
<div style="position:absolute;left:930px;top:90px;width:9px;height:798px;background:#f1f1f1"></div>
<div style="position:absolute;left:939px;top:90px;width:1px;height:798px;background:#c8c8c8"></div>
</section>
<section id="class_general_settings">
<div style="position:absolute;left:950px;top:100px;width:931px;height:39px;background:#f5f5f5;border-bottom:1px solid #c8c8c8"><div style="position:absolute;left:12px;top:1px;height:38px;line-height:38px;font-size:16px;color:#555;font-weight:700;letter-spacing:0.263px;white-space:nowrap;">General Settings</div></div>
<div style="position:absolute;left:960px;top:150px;height:32px;line-height:32px;font-size:13px;color:#444;font-weight:400;letter-spacing:0.327px;white-space:nowrap;">Name:</div>
<div style="position:absolute;left:1165px;top:149px;width:295px;height:32px;border:1px solid #cfcfcf;background:#fff;overflow:hidden"><div style="position:absolute;left:10px;top:2px;height:30px;line-height:30px;font-size:13px;color:#555;font-weight:400;letter-spacing:0.447px;white-space:nowrap;">MasterProduct</div></div>
<div style="position:absolute;left:960px;top:192px;height:32px;line-height:32px;font-size:13px;color:#444;font-weight:400;letter-spacing:0.378px;white-space:nowrap;">Description:</div>
<div style="position:absolute;left:1165px;top:191px;width:295px;height:82px;border:1px solid #cfcfcf;background:#fff;overflow:hidden"></div>
<div style="position:absolute;left:960px;top:284px;height:32px;line-height:32px;font-size:13px;color:#8a8a8a;font-weight:400;letter-spacing:0.438px;white-space:nowrap;">Unique identifier:</div>
<div style="position:absolute;left:1165px;top:283px;width:295px;height:32px;border:1px solid #dedede;background:#fff;overflow:hidden"><div style="position:absolute;left:10px;top:2px;height:30px;line-height:30px;font-size:13px;color:#8f8f8f;font-weight:400;letter-spacing:0.14px;white-space:nowrap;">63</div></div>
<div style="position:absolute;left:960px;top:326px;height:32px;line-height:32px;font-size:13px;color:#8a8a8a;font-weight:400;letter-spacing:-0.137px;white-space:nowrap;">PHP Class Name:</div>
<div style="position:absolute;left:1165px;top:325px;width:295px;height:32px;border:1px solid #dedede;background:#fff;overflow:hidden"><div style="position:absolute;left:10px;top:2px;height:30px;line-height:30px;font-size:13px;color:#8f8f8f;font-weight:400;letter-spacing:0.446px;white-space:nowrap;">Pimcore\Model\DataObject\MasterProduct</div></div>
<div style="position:absolute;left:960px;top:368px;height:32px;line-height:32px;font-size:13px;color:#444;font-weight:400;letter-spacing:-0.109px;white-space:nowrap;">Parent PHP Class:</div>
<div style="position:absolute;left:1165px;top:367px;width:395px;height:32px;border:1px solid #cfcfcf;background:#fff;overflow:hidden"><div style="position:absolute;left:10px;top:2px;height:30px;line-height:30px;font-size:13px;color:#555;font-weight:400;letter-spacing:0.38px;white-space:nowrap;">\Petrovich\WorkflowBundle\Classes\AbstractMasterProduct</div></div>
<div style="position:absolute;left:960px;top:410px;height:32px;line-height:32px;font-size:13px;color:#444;font-weight:400;letter-spacing:0.311px;white-space:nowrap;">Implements interface(s):</div>
<div style="position:absolute;left:1165px;top:409px;width:395px;height:32px;border:1px solid #cfcfcf;background:#fff;overflow:hidden"><div style="position:absolute;left:10px;top:2px;height:30px;line-height:30px;font-size:13px;color:#555;font-weight:400;letter-spacing:0.351px;white-space:nowrap;">\Petrovich\WorkflowBundle\Classes\VoteableInterface,\Petrovich\WorkflowBundle</div></div>
<div style="position:absolute;left:1549px;top:410px;width:10px;height:30px;background:#fff"></div>
<div style="position:absolute;left:960px;top:452px;height:32px;line-height:32px;font-size:13px;color:#444;font-weight:400;letter-spacing:0.102px;white-space:nowrap;">Use (traits):</div>
<div style="position:absolute;left:1165px;top:451px;width:395px;height:32px;border:1px solid #cfcfcf;background:#fff;overflow:hidden"><div style="position:absolute;left:10px;top:2px;height:30px;line-height:30px;font-size:13px;color:#555;font-weight:400;letter-spacing:0.36px;white-space:nowrap;">\Petrovich\WorkflowBundle\Classes\HasUnitMeasuresTrait</div></div>
<div style="position:absolute;left:960px;top:494px;height:32px;line-height:32px;font-size:13px;color:#444;font-weight:400;letter-spacing:-0.01px;white-space:nowrap;">Listing Parent PHP Class:</div>
<div style="position:absolute;left:1165px;top:493px;width:395px;height:32px;border:1px solid #cfcfcf;background:#fff;overflow:hidden"></div>
<div style="position:absolute;left:960px;top:536px;height:32px;line-height:32px;font-size:13px;color:#444;font-weight:400;letter-spacing:0.127px;white-space:nowrap;">Listing Use (traits):</div>
<div style="position:absolute;left:1165px;top:535px;width:395px;height:32px;border:1px solid #cfcfcf;background:#fff;overflow:hidden"></div>
<div style="position:absolute;left:960px;top:585px;height:17px;line-height:17px;font-size:13px;color:#444;font-weight:400;letter-spacing:0.085px;white-space:nowrap;">Link Provider Class or Service</div>
<div style="position:absolute;left:960px;top:602px;height:17px;line-height:17px;font-size:13px;color:#444;font-weight:400;letter-spacing:0.327px;white-space:nowrap;">Name:</div>
<div style="position:absolute;left:1165px;top:582px;width:395px;height:32px;border:1px solid #cfcfcf;background:#fff;overflow:hidden"></div>
<div style="position:absolute;left:960px;top:630px;height:32px;line-height:32px;font-size:13px;color:#444;font-weight:400;letter-spacing:-0.115px;white-space:nowrap;">Preview URL:</div>
<div style="position:absolute;left:1165px;top:629px;width:395px;height:32px;border:1px solid #cfcfcf;background:#fff;overflow:hidden"></div>
<div style="position:absolute;left:960px;top:672px;height:32px;line-height:32px;font-size:13px;color:#444;font-weight:400;letter-spacing:0.229px;white-space:nowrap;">Icon:</div>
<div style="position:absolute;left:1175px;top:671px;width:396px;height:32px;border:1px solid #cfcfcf;background:#fff;overflow:hidden"></div>
<div style="position:absolute;left:1591px;top:671px;width:50px;height:32px;border:1px solid #cfcfcf;background:#fff;overflow:hidden"></div>
<div style="position:absolute;left:1621px;top:685px;"><svg width="10" height="5" viewBox="0 0 10 5" style="display:block;"><path d="M0 0h10L5 5z" fill="#777"/></svg></div>
<div style="position:absolute;left:1651px;top:671px;width:32px;height:32px;background:#3a3d40;border:1px solid #111"><div style="position:absolute;left:3px;top:3px;"><svg width="24" height="24" viewBox="0 0 24 24" style="display:block;"><path fill="#2da04e" d="M17.650 6.350C16.200 4.900 14.210 4 12 4c-4.420 0-7.990 3.580-7.990 8s3.570 8 7.990 8c3.730 0 6.840-2.550 7.730-6h-2.080c-.82 2.330-3.040 4-5.650 4-3.310 0-6-2.690-6-6s2.690-6 6-6c1.660 0 3.140.69 4.220 1.780L13 11h7V4l-2.350 2.350z"/></svg></div></div>
<div style="position:absolute;left:1683px;top:671px;width:111px;height:32px;background:#3a3d40;border:1px solid #111"><div style="position:absolute;left:5px;top:5px;"><svg width="20" height="20" viewBox="0 0 20 20" style="display:block;"><g fill="#b0b0b0"><path d="M10 0L19.500 5V7H.5V5z"/><rect x="2.300" y="8" width="2.400" height="8.500"/><rect x="6.600" y="8" width="2.400" height="8.500"/><rect x="11" y="8" width="2.400" height="8.500"/><rect x="15.300" y="8" width="2.400" height="8.500"/><rect x=".5" y="17.500" width="19" height="2.500"/></g></svg></div><div style="position:absolute;left:35px;top:0px;height:30px;line-height:30px;font-size:13px;color:#fff;font-weight:400;letter-spacing:-0.147px;white-space:nowrap;">Icon Library</div></div>
<div style="position:absolute;left:960px;top:714px;height:32px;line-height:32px;font-size:13px;color:#444;font-weight:400;letter-spacing:0.431px;white-space:nowrap;">Group:</div>
<div style="position:absolute;left:1165px;top:713px;width:395px;height:32px;border:1px solid #cfcfcf;background:#fff;overflow:hidden"><div style="position:absolute;left:10px;top:2px;height:30px;line-height:30px;font-size:13px;color:#555;font-weight:400;letter-spacing:0.74px;white-space:nowrap;">product</div></div>
<div style="position:absolute;left:960px;top:756px;height:32px;line-height:32px;font-size:13px;color:#444;font-weight:400;letter-spacing:0.365px;white-space:nowrap;">Allow inheritance:</div>
<div style="position:absolute;left:1165px;top:763px;width:14px;height:14px;border:1px solid #767676;border-radius:3px;background:#fff"></div>
<div style="position:absolute;left:960px;top:798px;height:32px;line-height:32px;font-size:13px;color:#8a8a8a;font-weight:400;letter-spacing:0.306px;white-space:nowrap;">Allow variants:</div>
<div style="position:absolute;left:1165px;top:805px;width:14px;height:14px;border:1px solid #b9b9b9;border-radius:3px;background:#fff"></div>
<div style="position:absolute;left:960px;top:840px;height:32px;line-height:32px;font-size:13px;color:#8a8a8a;font-weight:400;letter-spacing:0.281px;white-space:nowrap;">Show variants in tree:</div>
<div style="position:absolute;left:1165px;top:847px;width:14px;height:14px;border:1px solid #b9b9b9;border-radius:3px;background:#fff"></div>
<div style="position:absolute;left:1891px;top:90px;width:17px;height:798px;background:#f1f1f1"><div style="position:absolute;left:2px;top:17px;width:13px;height:335px;background:#c1c1c1"></div><div style="position:absolute;left:5px;top:7px;"><svg width="7" height="4" viewBox="0 0 7 4" style="display:block;"><path d="M0 4h7L3.500 0z" fill="#a3a3a3"/></svg></div><div style="position:absolute;left:5px;top:787px;"><svg width="7" height="4" viewBox="0 0 7 4" style="display:block;"><path d="M0 0h7L3.500 4z" fill="#505050"/></svg></div></div>
<div style="position:absolute;left:1908px;top:90px;width:1px;height:798px;background:#c8c8c8"></div>
<div style="position:absolute;left:1909px;top:90px;width:1px;height:798px;background:#ececec"></div>
</section>
<footer id="class_toolbar">
<div style="position:absolute;left:630px;top:888px;width:1280px;height:44px;background:#ececec"></div>
<div style="position:absolute;left:1303px;top:894px;width:193px;height:32px;background:#3a3d40;border:1px solid #0a0a0a"><div style="position:absolute;left:5px;top:4px;"><svg width="22" height="22" viewBox="0 0 22 22" style="display:block;"><path fill="none" stroke="#8048cc" stroke-width="1.900" d="M1 4.300V18.950H11.500"/><rect x="4.100" y="0" width="15.900" height="15.900" rx="2.500" fill="#6127c2"/><path d="M7 4.150h10M7 7.950h10M7 11.950h6.200" stroke="#3a3d40" stroke-width="1.750" fill="none"/><circle cx="16" cy="16.300" r="5.900" fill="#2da04e"/><path d="M16 12.700v7.200M12.400 16.300h7.200" stroke="#fff" stroke-width="2.100" fill="none"/></svg></div><div style="position:absolute;left:35px;top:0px;height:30px;line-height:30px;font-size:13px;color:#fff;font-weight:400;letter-spacing:-0.253px;white-space:nowrap;">Configure Custom Layouts</div></div>
<div style="position:absolute;left:1502px;top:894px;width:141px;height:32px;background:#3a3d40;border:1px solid #0a0a0a"><div style="position:absolute;left:3px;top:3px;"><svg width="24" height="24" viewBox="0 0 24 24" style="display:block;"><path fill="#2da04e" d="M12 4V1L8 5l4 4V6c3.310 0 6 2.690 6 6 0 1.010-.25 1.970-.7 2.800l1.460 1.460C19.540 15.030 20 13.570 20 12c0-4.420-3.580-8-8-8zm0 14c-3.310 0-6-2.690-6-6 0-1.010.25-1.970.7-2.800L5.240 7.740C4.460 8.970 4 10.430 4 12c0 4.420 3.580 8 8 8v3l4-4-4-4v3z"/></svg></div><div style="position:absolute;left:35px;top:0px;height:30px;line-height:30px;font-size:13px;color:#fff;font-weight:400;letter-spacing:-0.182px;white-space:nowrap;">Reload Definition</div></div>
<div style="position:absolute;left:1650px;top:894px;width:83px;height:32px;background:#3a3d40;border:1px solid #0a0a0a"><div style="position:absolute;left:3px;top:7px;"><svg width="24" height="16" viewBox="0 0 24 16" style="display:block;"><path d="M7.800 15H4.900A4.100 4.100 0 0 1 4.200 6.800A7.200 7.200 0 0 1 17.900 4.900A5.100 5.100 0 0 1 19.100 15H16.300" stroke="#a9a9a9" stroke-width="1.900" fill="none"/><path d="M12 5.600L16.600 10.200H13.900V15.800H10.100V10.200H7.400z" fill="#2da04e"/></svg></div><div style="position:absolute;left:35px;top:0px;height:30px;line-height:30px;font-size:13px;color:#fff;font-weight:400;letter-spacing:0.211px;white-space:nowrap;">Import</div></div>
<div style="position:absolute;left:1740px;top:894px;width:82px;height:32px;background:#3a3d40;border:1px solid #0a0a0a"><div style="position:absolute;left:3px;top:7px;"><svg width="24" height="16" viewBox="0 0 24 16" style="display:block;"><path d="M7.800 15H4.900A4.100 4.100 0 0 1 4.200 6.800A7.200 7.200 0 0 1 17.900 4.900A5.100 5.100 0 0 1 19.100 15H16.300" stroke="#a9a9a9" stroke-width="1.900" fill="none"/><path d="M12 15.800L16.600 11.200H13.900V6.200H10.100V11.200H7.400z" fill="#2da04e"/></svg></div><div style="position:absolute;left:35px;top:0px;height:30px;line-height:30px;font-size:13px;color:#fff;font-weight:400;letter-spacing:-0.135px;white-space:nowrap;">Export</div></div>
<div style="position:absolute;left:1828px;top:894px;width:75px;height:32px;background:#3a3d40;border:1px solid #0a0a0a"><div style="position:absolute;left:7px;top:5px;"><svg width="20" height="20" viewBox="0 0 20 20" style="display:block;"><circle cx="10" cy="10" r="10" fill="#2da04e"/><path d="M5 10.500l3.500 3.300L15.500 6.500" stroke="#fff" stroke-width="2.200" fill="none"/></svg></div><div style="position:absolute;left:37px;top:0px;height:30px;line-height:30px;font-size:13px;color:#fff;font-weight:400;letter-spacing:-1.011px;white-space:nowrap;">Save</div></div>
</footer>
</main>
<svg style="position:absolute;left:1790px;top:8px" width="120" height="28" viewBox="0 0 120 28"><g font-family='"Liberation Sans", sans-serif' fill="#696b6e" stroke="#696b6e"><text transform="matrix(1.1963 0 0 0.9058 8.536 20.350)" font-size="20" stroke-width="0.285">P</text><text transform="matrix(1.1000 0 0 0.9058 24.470 20.350)" font-size="20" stroke-width="0.299">I</text><text transform="matrix(1.1407 0 0 0.9058 29.825 20.350)" font-size="20" stroke-width="0.293">M</text><text transform="matrix(1.2598 0 0 1.2324 48.890 22.604)" font-size="20" stroke-width="0.241">C</text><text transform="matrix(1.0073 0 0 0.8803 66.443 20.174)" font-size="20" stroke-width="0.318">O</text><text transform="matrix(1.1083 0 0 0.9058 81.777 20.350)" font-size="20" stroke-width="0.298">R</text><text transform="matrix(0.9450 0 0 0.9058 98.138 20.350)" font-size="20" stroke-width="0.324">E</text><text x="110.500" y="11.500" font-size="5.500" stroke="none">®</text><path d="M58.500 22.300C63.500 21.300 65.500 13.500 71.500 9" fill="none" stroke-width="2"/></g></svg>
</body></html>
